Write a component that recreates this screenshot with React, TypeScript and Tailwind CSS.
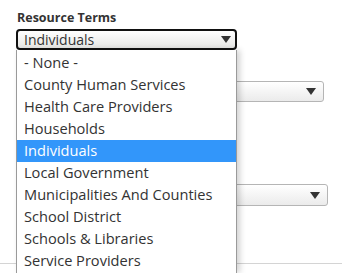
import React from 'react';

const options = [
  '- None -',
  'County Human Services',
  'Health Care Providers',
  'Households',
  'Individuals',
  'Local Government',
  'Municipalities And Counties',
  'School District',
  'Schools & Libraries',
  'Service Providers',
];

function Caret() {
  return (
    <svg viewBox="0 0 10 7" className="w-[10px] h-[7px] text-[#333]">
      <path d="M0 0H10L5 7Z" fill="currentColor" />
    </svg>
  );
}

export default function App() {
  return (
    <div
      className="relative h-[273px] overflow-hidden bg-white text-[#333]"
      style={{ fontFamily: '"Open Sans", "DejaVu Sans", sans-serif' }}
    >
      <div className="px-4 pt-[9px]">
        <div className="pl-px text-[12.5px] font-bold leading-[18px]">Resource Terms</div>
        <div className="mt-[2px] w-[221px] h-[21px] rounded-[4px] border-2 border-[#111] bg-gradient-to-b from-white to-[#e6e6e4] flex items-center justify-between pl-[6px] pr-[4px] text-[14px]">
          <span className="leading-none">Individuals</span>
          <Caret />
        </div>

        {/* fields hidden behind the open list */}
        <div className="mt-[31px] w-[308px] h-[21px] rounded-[3px] border border-[#b5b5b5] bg-gradient-to-b from-white to-[#ebebeb] flex items-center justify-end pr-[7px]">
          <Caret />
        </div>
        <div className="mt-[82px] w-[312px] h-[22px] rounded-[3px] border border-[#b5b5b5] bg-gradient-to-b from-white to-[#ebebeb] flex items-center justify-end pr-[7px]">
          <Caret />
        </div>
      </div>
      <div className="absolute left-0 right-0 top-[263px] border-t border-[#d4d4d4]" />

      {/* open dropdown list */}
      <div className="absolute left-4 top-[50px] bottom-0 w-[221px] border-x border-[#9a9a9a] bg-white pt-[2px] shadow-[3px_0_6px_rgba(0,0,0,0.18)]">
        {options.map((o) => (
          <div
            key={o}
            className={`h-[22px] pl-[7px] flex items-center text-[14.6px] whitespace-nowrap ${
              o === 'Individuals' ? 'bg-[#3296fa] text-white' : 'text-[#333]'
            }`}
          >
            {o}
          </div>
        ))}
      </div>
    </div>
  );
}
